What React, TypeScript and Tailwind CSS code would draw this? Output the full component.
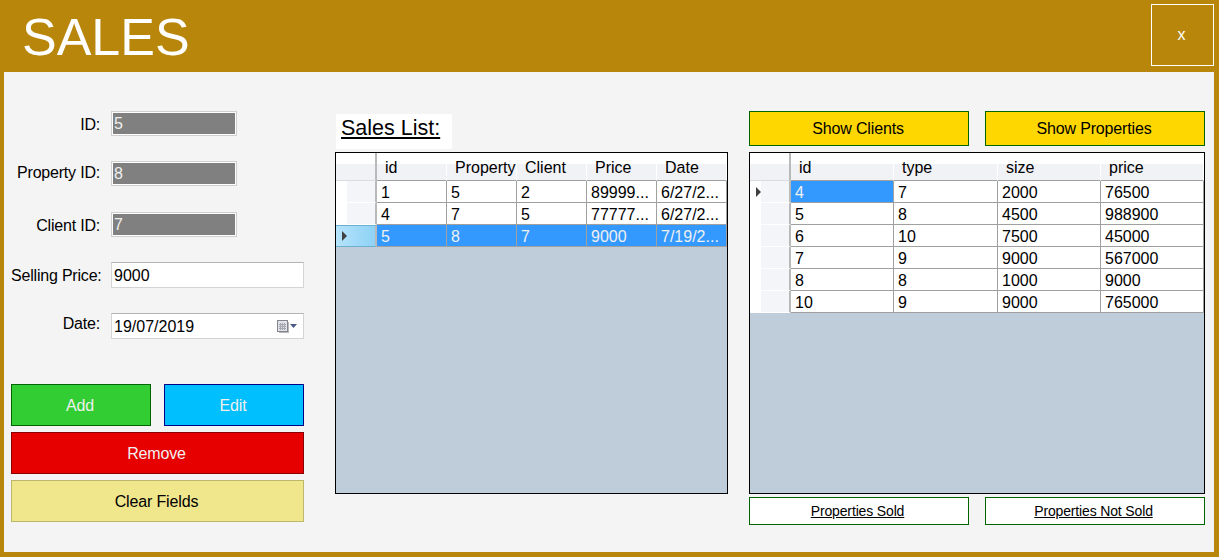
const font = "font-['Liberation_Sans',Arial,sans-serif]";

const headerBg = "bg-[linear-gradient(#ffffff_0%,#ffffff_40%,#f1f2f6_40%,#f1f2f6_100%)]";

interface DataGridProps {
    columnsClass: string;
    headers: string[];
    rows: string[][];
    activeRow: number;
    wholeRowSelected: boolean;
}

function DataGrid({ columnsClass, headers, rows, activeRow, wholeRowSelected }: DataGridProps) {
    return (
        <div className="h-[342px] border border-black bg-[#bfccd9] text-[16px] leading-none text-black">
            {/* Header */}
            <div className={`grid h-[28px] ${columnsClass} bg-white`}>
                <div className={`${headerBg} border-r-2 border-[#b9b9b9] border-b border-b-[#d9dbe0]`}></div>
                {headers.map((h) => (
                    <div key={h} className={`${headerBg} flex items-center pl-2 pt-[3px] border-r border-r-white border-b border-b-[#a0a0a0] whitespace-nowrap overflow-hidden`}>
                        {h}
                    </div>
                ))}
            </div>

            {/* Rows */}
            {rows.map((row, i) => {
                const active = i === activeRow;
                const marked = active && wholeRowSelected;
                return (
                    <div key={i} className={`grid h-[22px] ${columnsClass}`}>
                        <div className={`flex items-center pl-[6px] border-r-2 border-b border-[#b9b9b9] ${marked ? "border-t border-t-[#6fb0d0] border-b-[#6fb0d0] bg-[linear-gradient(90deg,#b5e3fa,#8ed2f6)]" : "border-b-white bg-[linear-gradient(90deg,#ffffff_0%,#ffffff_28%,#f4f5f8_28%,#f4f5f8_100%)]"}`}>
                            {active && <div className="w-0 h-0 border-y-[5px] border-y-transparent border-l-[5px] border-l-[#404040]"></div>}
                        </div>
                        {row.map((cell, j) => {
                            const selected = active && (wholeRowSelected || j === 0);
                            return (
                                <div key={j} className={`flex items-center pl-1 pt-[3px] border-r border-b border-[#a0a0a0] whitespace-nowrap overflow-hidden ${selected ? "bg-[#3399ff] text-[#f0f0f0]" : "bg-white"}`}>
                                    {cell}
                                </div>
                            );
                        })}
                    </div>
                );
            })}
        </div>
    );
}

interface FieldProps {
    label: string;
    value: string;
    readOnly?: boolean;
    className: string;
    labelClass?: string;
}

function Field({ label, value, readOnly, className, labelClass }: FieldProps) {
    return (
        <div className={`flex items-center gap-[11px] ${className}`}>
            <label className={`w-[89px] text-right text-[16px] leading-none tracking-[-0.2px] text-black whitespace-nowrap ${labelClass ?? ""}`}>{label}</label>
            {readOnly ? (
                <input readOnly value={value} className="w-[126px] h-[25px] pl-[2px] text-[16px] text-[#f0f0f0] bg-[#808080] border border-[#cfcfcf] shadow-[inset_0_0_0_1px_#ffffff] outline-none" />
            ) : (
                <input readOnly value={value} className="w-[193px] h-[26px] pl-[2px] pt-[2px] text-[16px] text-black bg-white border border-[#d4d4d4] border-t-[#b4b4b4] outline-none" />
            )}
        </div>
    );
}

function CalendarIcon() {
    return (
        <svg width="26" height="13" viewBox="0 0 26 13" fill="none">
            <rect x="2" y="2" width="10" height="11" fill="#b8b8b8" />
            <rect x="0.5" y="0.5" width="10" height="11" fill="#dfe2e8" stroke="#85858c" />
            <path d="M2 4.5h7M2 6.5h7M2 8.5h7M3.5 3v7M5.5 3v7M7.5 3v7" stroke="#a5a8b0" strokeWidth="1" />
            <path d="M13 4h7l-3.5 4z" fill="#4a5a85" />
        </svg>
    );
}

export default function App() {
    return (
        <div className={`${font} w-[1219px] h-[557px] bg-[#b8860b] flex flex-col pl-[4px] pr-[5px] pb-[5px]`}>
            {/* Title bar */}
            <div className="h-[72px] flex justify-between pt-[4px]">
                <h1 className="text-[52px] leading-[66px] text-white pl-[18px]">SALES</h1>
                <button className="w-[63px] h-[62px] border border-white text-white text-[16px] pr-[2px]">x</button>
            </div>

            <div className="flex-1 bg-[#f4f4f4] flex pl-[7px] pt-[39px]">
                {/* Form */}
                <div className="w-[293px]">
                    <Field label="ID:" value="5" readOnly className="" labelClass="pt-[3px]" />
                    <Field label="Property ID:" value="8" readOnly className="mt-[25px]" labelClass="pb-px" />
                    <Field label="Client ID:" value="7" readOnly className="mt-[26px]" labelClass="pt-[2px]" />
                    <Field label="Selling Price:" value="9000" className="mt-[25px]" labelClass="pt-[2px]" />
                    <div className="flex items-center gap-[11px] mt-[25px]">
                        <label className="w-[89px] text-right text-[16px] leading-none tracking-[-0.2px] text-black pb-[4px]">Date:</label>
                        <div className="w-[193px] h-[26px] flex items-center justify-between pl-[2px] text-[16px] text-black bg-white border border-[#d4d4d4] border-t-[#b4b4b4]">
                            <span className="pt-[2px]">19/07/2019</span>
                            <CalendarIcon />
                        </div>
                    </div>

                    <div className="mt-[45px] flex flex-col gap-[6px] text-[16px] tracking-[-0.15px]">
                        <div className="flex justify-between">
                            <button className="w-[140px] h-[42px] pt-[2px] pr-[2px] bg-[#32cd32] border border-[#006400] text-[#f0f0f0]">Add</button>
                            <button className="w-[140px] h-[42px] pt-[2px] pr-[2px] bg-[#00bfff] border border-[#00008b] text-[#f0f0f0]">Edit</button>
                        </div>
                        <button className="h-[42px] pt-[2px] pr-[2px] bg-[#e60000] border border-[#8b0000] text-[#f0f0f0]">Remove</button>
                        <button className="h-[42px] pt-[2px] pr-[2px] bg-[#f0e68c] border border-[#bdb76b] text-black">Clear Fields</button>
                    </div>
                </div>

                {/* Sales list */}
                <div className="w-[393px] ml-[31px] pt-[3px]">
                    <div className="ml-px w-[116px] h-[35px] bg-white pl-[5px] pt-[3px] text-[21.5px] leading-[22px] text-black">
                        <span className="underline">Sales List:</span>
                    </div>
                    <div className="mt-[3px]">
                        <DataGrid
                            columnsClass="grid-cols-[41px_70px_70px_70px_70px_70px]"
                            headers={["id", "Property", "Client", "Price", "Date"]}
                            rows={[
                                ["1", "5", "2", "89999...", "6/27/2..."],
                                ["4", "7", "5", "77777...", "6/27/2..."],
                                ["5", "8", "7", "9000", "7/19/2..."],
                            ]}
                            activeRow={2}
                            wholeRowSelected
                        />
                    </div>
                </div>

                {/* Properties */}
                <div className="w-[456px] ml-[21px] flex flex-col">
                    <div className="flex justify-between text-[16px] tracking-[-0.15px] text-black">
                        <button className="w-[220px] h-[35px] pr-[2px] bg-[#ffd700] border border-[#006400]">Show Clients</button>
                        <button className="w-[220px] h-[35px] pr-[2px] bg-[#ffd700] border border-[#006400]">Show Properties</button>
                    </div>
                    <div className="mt-[6px]">
                        <DataGrid
                            columnsClass="grid-cols-[41px_103px_104px_103px_103px]"
                            headers={["id", "type", "size", "price"]}
                            rows={[
                                ["4", "7", "2000", "76500"],
                                ["5", "8", "4500", "988900"],
                                ["6", "10", "7500", "45000"],
                                ["7", "9", "9000", "567000"],
                                ["8", "8", "1000", "9000"],
                                ["10", "9", "9000", "765000"],
                            ]}
                            activeRow={0}
                            wholeRowSelected={false}
                        />
                    </div>
                    <div className="mt-[3px] flex justify-between text-[14px] tracking-[-0.15px] text-black">
                        <button className="w-[220px] h-[28px] pr-[3px] bg-white border border-[#006400] underline">Properties Sold</button>
                        <button className="w-[220px] h-[28px] pr-[3px] bg-white border border-[#006400] underline">Properties Not Sold</button>
                    </div>
                </div>
            </div>
        </div>
    );
}
